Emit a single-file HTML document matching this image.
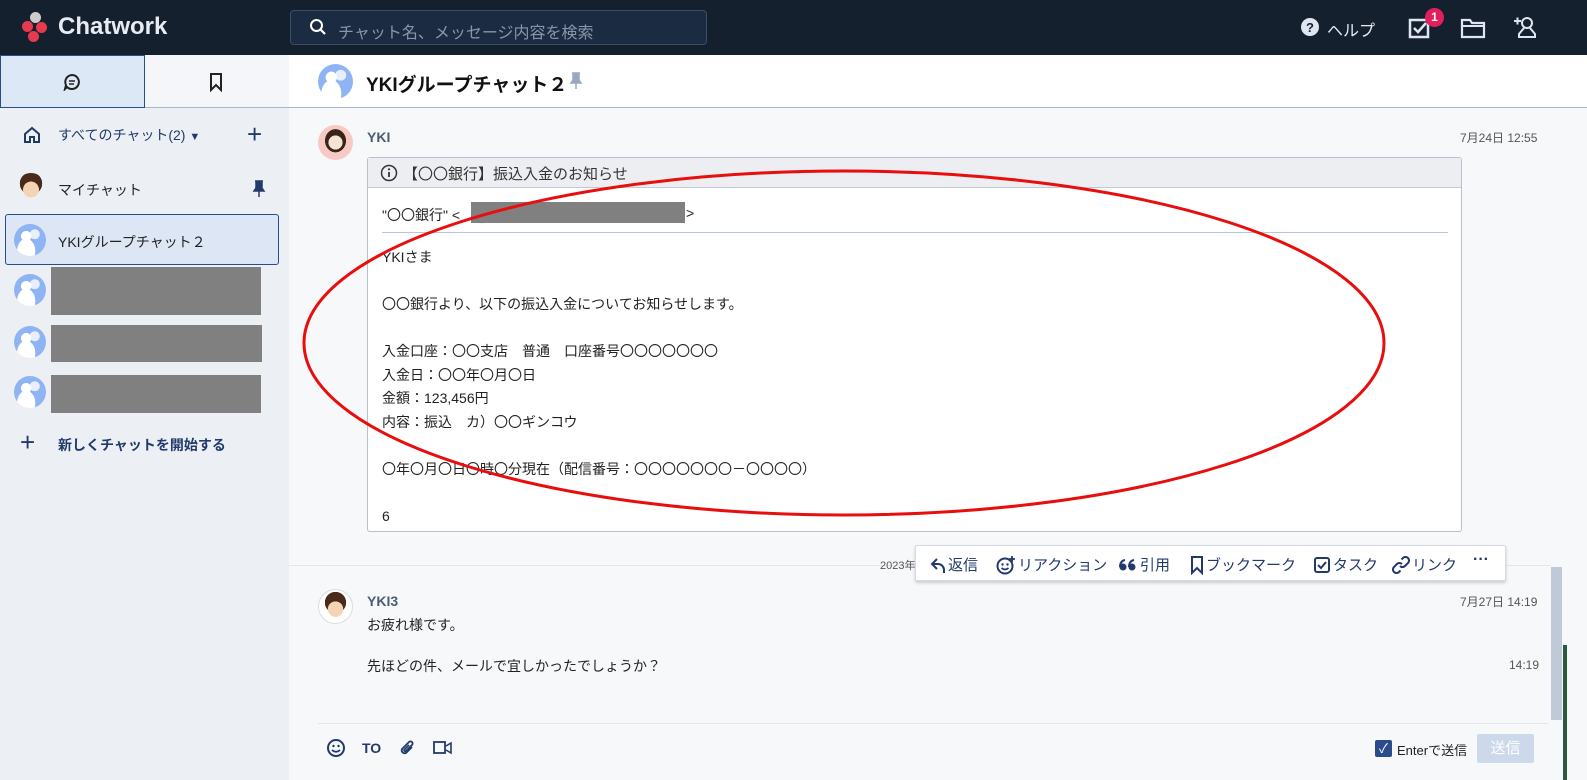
<!DOCTYPE html><html><head><meta charset="utf-8"><style>
*{box-sizing:border-box;margin:0;padding:0}
body{width:1587px;height:780px;overflow:hidden;font-family:"Liberation Sans","Noto Sans CJK JP",sans-serif;background:#f7f8fa;position:relative;color:#222;font-size:14px}
.a{position:absolute}
.hdr{left:0;top:0;width:1587px;height:55px;background:#15202f}
.av{border-radius:50%;background:#c9dcff;overflow:hidden}
.grp{background:radial-gradient(circle at 38% 38%,#fff 0 18%,transparent 19%),radial-gradient(ellipse at 38% 85%,#fff 0 32%,transparent 33%),radial-gradient(circle at 65% 32%,#e8f0ff 0 16%,transparent 17%),#8fb4f4}
.gray{background:#808080}
.tb{color:#223a6b;font-size:14px}
.act{position:absolute;top:8px;display:flex;align-items:center;gap:2px}
.act svg{flex:none}
</style></head><body>
<div class="a hdr"></div>
<div class="a" style="left:22px;top:12px;width:30px;height:30px">
<div class="a" style="left:8px;top:0;width:11px;height:11px;border-radius:50%;background:#ccc"></div>
<div class="a" style="left:0;top:9px;width:11px;height:11px;border-radius:50%;background:#e83a4f"></div>
<div class="a" style="left:14px;top:10px;width:11px;height:11px;border-radius:50%;background:#e83a4f"></div>
<div class="a" style="left:6px;top:19px;width:11px;height:11px;border-radius:50%;background:#e83a4f"></div>
</div>
<div class="a" style="left:58px;top:13px;color:#e8ecf2;font-size:24px;font-weight:bold">Chatwork</div>
<div class="a" style="left:290px;top:10px;width:417px;height:35px;border:1px solid #3a4d6a;border-radius:4px;background:#1b2b42"></div>
<svg class="a" style="left:309px;top:18px" width="18" height="18"><circle cx="7.5" cy="7.5" r="5.5" fill="none" stroke="#fff" stroke-width="2"/><path d="M11.5 11.5 16 16" stroke="#fff" stroke-width="2.2"/></svg>
<div class="a" style="left:338px;top:19px;color:#8a96a8;font-size:16px">チャット名、メッセージ内容を検索</div>
<svg class="a" style="left:1300px;top:17px" width="20" height="20"><circle cx="10" cy="10" r="9" fill="#dfe6f2"/><text x="10" y="15" text-anchor="middle" font-size="13" font-weight="bold" fill="#15202f" font-family="Liberation Sans">?</text></svg>
<div class="a" style="left:1327px;top:17px;color:#e8ecf2;font-size:16px">ヘルプ</div>
<svg class="a" style="left:1408px;top:17px" width="26" height="22"><path d="M2 3h18v17H2z" fill="none" stroke="#dfe6f2" stroke-width="2.5"/><path d="M6 11l4 4 8-9" fill="none" stroke="#dfe6f2" stroke-width="2.5"/></svg>
<div class="a" style="left:1425px;top:8px;width:19px;height:19px;border-radius:50%;background:#e21f5c;color:#fff;font-size:12px;font-weight:bold;text-align:center;line-height:19px">1</div>
<svg class="a" style="left:1460px;top:17px" width="26" height="22"><path d="M2 3h8l2 3h12v14H2z" fill="none" stroke="#dfe6f2" stroke-width="2.2"/><path d="M2 9h22" stroke="#dfe6f2" stroke-width="2"/></svg>
<svg class="a" style="left:1512px;top:15px" width="26" height="26"><path d="M2 6h7M5.5 2.5v7" stroke="#dfe6f2" stroke-width="2"/><circle cx="15" cy="8" r="5" fill="none" stroke="#dfe6f2" stroke-width="2"/><path d="M12 13l-5 6v3h16v-3l-5-6" fill="none" stroke="#dfe6f2" stroke-width="2"/></svg>

<div class="a" style="left:0;top:55px;width:289px;height:725px;background:#eceff4"></div>
<div class="a" style="left:0;top:55px;width:145px;height:53px;background:#dde8f7;border:1px solid #2b4c8a"></div>
<div class="a" style="left:145px;top:55px;width:145px;height:53px;background:#f4f6f9;border-bottom:1px solid #aab5c6;border-right:1px solid #aab5c6"></div>
<svg class="a" style="left:63px;top:73px" width="18" height="18"><path d="M9 2a7 7 0 1 1-5 12l-2 2 1-4A7 7 0 0 1 9 2z" fill="none" stroke="#222" stroke-width="2"/><path d="M6 8h6M6 11h5" stroke="#222" stroke-width="1.5"/></svg>
<svg class="a" style="left:209px;top:72px" width="14" height="20"><path d="M2 2h10v16l-5-5-5 5z" fill="none" stroke="#222" stroke-width="2"/></svg>
<div class="a" style="left:289px;top:55px;width:1298px;height:53px;background:#fff;border-bottom:1px solid #aab5c6"></div>
<div class="a av grp" style="left:318px;top:64px;width:35px;height:35px"></div>
<div class="a" style="left:366px;top:70px;font-size:19px;font-weight:bold;color:#111">YKIグループチャット２</div>
<svg class="a" style="left:569px;top:72px" width="14" height="18"><path d="M3 1h8M4 1v7l-2 3h10l-2-3V1M7 11v6" fill="#99a8bf" stroke="#99a8bf" stroke-width="1.5"/></svg>

<svg class="a" style="left:23px;top:126px" width="18" height="18"><path d="M2 8l7-6 7 6v8h-5v-5H7v5H2z" fill="none" stroke="#223a6b" stroke-width="2"/></svg>
<div class="a tb" style="left:58px;top:125px">すべてのチャット(2) <span style="font-size:11px">▼</span></div>
<div class="a" style="left:247px;top:119px;font-size:26px;color:#223a6b">+</div>
<div class="a av" style="left:16px;top:173px;width:30px;height:30px;background:radial-gradient(circle at 50% 55%,#f5d4b4 0 35%,transparent 36%),radial-gradient(circle at 50% 35%,#4a2a1a 0 45%,transparent 46%),#eceff4"></div>
<div class="a tb" style="left:58px;top:180px;color:#222">マイチャット</div>
<svg class="a" style="left:252px;top:180px" width="14" height="18"><path d="M3 1h8M4 1v7l-2 3h10l-2-3V1M7 11v6" fill="#223a6b" stroke="#223a6b" stroke-width="1.5"/></svg>
<div class="a" style="left:5px;top:214px;width:274px;height:51px;background:#dce6f5;border:1px solid #2b4c8a;border-radius:3px"></div>
<div class="a av grp" style="left:14px;top:224px;width:32px;height:32px"></div>
<div class="a" style="left:58px;top:232px;font-size:14px">YKIグループチャット２</div>
<div class="a av grp" style="left:14px;top:274px;width:32px;height:32px"></div>
<div class="a gray" style="left:51px;top:267px;width:210px;height:48px"></div>
<div class="a av grp" style="left:14px;top:326px;width:32px;height:32px"></div>
<div class="a gray" style="left:51px;top:325px;width:211px;height:37px"></div>
<div class="a av grp" style="left:14px;top:376px;width:32px;height:32px"></div>
<div class="a gray" style="left:51px;top:375px;width:210px;height:38px"></div>
<div class="a" style="left:20px;top:427px;font-size:26px;color:#223a6b">+</div>
<div class="a tb" style="left:58px;top:435px;font-weight:bold">新しくチャットを開始する</div>

<div class="a av" style="left:318px;top:125px;width:35px;height:35px;background:radial-gradient(ellipse at 50% 50%,#f6e3d8 0 28%,transparent 29%),radial-gradient(ellipse at 50% 45%,#3a2418 0 42%,transparent 43%),#f7c9c4"></div>
<div class="a" style="left:367px;top:129px;font-weight:bold;color:#4b5d70;font-size:14px">YKI</div>
<div class="a" style="left:1460px;top:129px;font-size:12px;color:#555">7月24日 12:55</div>
<div class="a" style="left:367px;top:157px;width:1095px;height:375px;background:#fff;border:1px solid #b8c0cc;border-radius:3px"></div>
<div class="a" style="left:368px;top:158px;width:1093px;height:30px;background:#eceef1;border-bottom:1px solid #c3c9d2"></div>
<svg class="a" style="left:380px;top:164px" width="18" height="18"><circle cx="9" cy="9" r="7.5" fill="none" stroke="#333" stroke-width="1.5"/><path d="M9 8v5" stroke="#333" stroke-width="1.8"/><circle cx="9" cy="5.3" r="1.1" fill="#333"/></svg>
<div class="a" style="left:403px;top:163px;font-size:15px;color:#333">【〇〇銀行】振込入金のお知らせ</div>
<div class="a" style="left:382px;top:205px;font-size:14px">"〇〇銀行" &lt;</div>
<div class="a gray" style="left:471px;top:202px;width:214px;height:21px"></div>
<div class="a" style="left:686px;top:205px;font-size:14px">&gt;</div>
<div class="a" style="left:382px;top:232px;width:1066px;height:1px;background:#b8c5d6"></div>
<div class="a" style="left:382px;top:246px;font-size:14px;line-height:23.5px;white-space:pre">YKIさま

〇〇銀行より、以下の振込入金についてお知らせします。

入金口座：〇〇支店　普通　口座番号〇〇〇〇〇〇〇
入金日：〇〇年〇月〇日
金額：123,456円
内容：振込　カ）〇〇ギンコウ

〇年〇月〇日〇時〇分現在（配信番号：〇〇〇〇〇〇〇－〇〇〇〇）

6</div>
<svg class="a" style="left:0;top:0" width="1587" height="780"><ellipse cx="844" cy="343" rx="540" ry="172" fill="none" stroke="#e80e0e" stroke-width="3"/></svg>

<div class="a" style="left:289px;top:565px;width:1262px;height:1px;background:#e3e7ec"></div>
<div class="a" style="left:880px;top:557px;font-size:11px;color:#555">2023年</div>
<div class="a" style="left:915px;top:545px;width:591px;height:36px;background:#fff;border:1px solid #d5dbe4;box-shadow:0 2px 3px rgba(0,0,0,.18);border-radius:2px;color:#223a6b;font-size:15px;white-space:nowrap">
<span class="act" style="left:14px"><svg width="16" height="18"><path d="M7 3 2 8l5 5M2 8h6a6 6 0 0 1 6 6v3" fill="none" stroke="#223a6b" stroke-width="2"/></svg>返信</span>
<span class="act" style="left:80px"><svg width="20" height="20"><circle cx="9" cy="11" r="7.5" fill="none" stroke="#223a6b" stroke-width="2"/><circle cx="6.5" cy="9.5" r="1.2" fill="#223a6b"/><circle cx="11.5" cy="9.5" r="1.2" fill="#223a6b"/><path d="M5.5 13q3.5 3 7 0M16 1v6M13 4h6" fill="none" stroke="#223a6b" stroke-width="1.8"/></svg>リアクション</span>
<span class="act" style="left:202px"><svg width="20" height="14"><circle cx="5" cy="9" r="3.5" fill="#223a6b"/><circle cx="14" cy="9" r="3.5" fill="#223a6b"/><path d="M2 9q0-6 5-7M11 9q0-6 5-7" stroke="#223a6b" stroke-width="2" fill="none"/></svg>引用</span>
<span class="act" style="left:274px"><svg width="14" height="20"><path d="M2 2h10v16l-5-5-5 5z" fill="none" stroke="#223a6b" stroke-width="2"/></svg>ブックマーク</span>
<span class="act" style="left:397px"><svg width="18" height="18"><rect x="2" y="2" width="14" height="14" rx="2" fill="none" stroke="#223a6b" stroke-width="2"/><path d="M5 9l3 3 5-6" fill="none" stroke="#223a6b" stroke-width="2"/></svg>タスク</span>
<span class="act" style="left:476px"><svg width="18" height="18"><path d="M8 10a3.5 3.5 0 0 0 5 0l3-3a3.5 3.5 0 0 0-5-5l-1.5 1.5M10 8a3.5 3.5 0 0 0-5 0l-3 3a3.5 3.5 0 0 0 5 5l1.5-1.5" fill="none" stroke="#223a6b" stroke-width="2"/></svg>リンク</span>
<span class="a" style="left:557px;top:5px;font-weight:bold;font-size:16px">···</span>
</div>

<div class="a av" style="left:318px;top:589px;width:35px;height:35px;background:radial-gradient(circle at 50% 58%,#f5d4b4 0 30%,transparent 31%),radial-gradient(circle at 50% 38%,#4a2a1a 0 40%,transparent 41%),#fff;border:1px solid #ddd"></div>
<div class="a" style="left:367px;top:593px;font-weight:bold;color:#4b5d70">YKI3</div>
<div class="a" style="left:1460px;top:593px;font-size:12px;color:#555">7月27日 14:19</div>
<div class="a" style="left:367px;top:615px;font-size:14px">お疲れ様です。</div>
<div class="a" style="left:367px;top:656px;font-size:14px">先ほどの件、メールで宜しかったでしょうか？</div>
<div class="a" style="left:1509px;top:658px;font-size:12px;color:#555">14:19</div>
<div class="a" style="left:318px;top:723px;width:1230px;height:1px;background:#e3e7ec"></div>
<div class="a" style="left:1551px;top:567px;width:11px;height:153px;background:#c0c9d8"></div>
<div class="a" style="left:1563px;top:645px;width:4px;height:135px;background:#2a5a3a"></div>
<svg class="a" style="left:326px;top:738px" width="20" height="20"><circle cx="10" cy="10" r="8" fill="none" stroke="#223a6b" stroke-width="2"/><circle cx="7.5" cy="8" r="1.2" fill="#223a6b"/><circle cx="12.5" cy="8" r="1.2" fill="#223a6b"/><path d="M6 12q4 3.5 8 0" fill="none" stroke="#223a6b" stroke-width="1.8"/></svg>
<div class="a" style="left:362px;top:740px;font-size:14px;font-weight:bold;color:#223a6b">TO</div>
<svg class="a" style="left:398px;top:738px" width="18" height="20"><path d="M14 9l-6 6a3 3 0 0 1-4-4l7-7a2 2 0 0 1 3 3l-6 6a1 1 0 0 1-1.5-1.5L11 7" fill="none" stroke="#223a6b" stroke-width="1.8"/></svg>
<svg class="a" style="left:433px;top:741px" width="20" height="14"><rect x="1" y="1" width="11" height="11" fill="none" stroke="#223a6b" stroke-width="1.8"/><path d="M13 5l5-3v10l-5-3" fill="none" stroke="#223a6b" stroke-width="1.6"/></svg>
<div class="a" style="left:1375px;top:740px;width:17px;height:17px;background:#2b4c8a;border-radius:2px;color:#fff;font-size:13px;text-align:center;line-height:17px">✓</div>
<div class="a" style="left:1397px;top:740px;font-size:13px">Enterで送信</div>
<div class="a" style="left:1477px;top:734px;width:57px;height:29px;background:#cdd8ea;border-radius:2px;color:#fff;font-size:15px;text-align:center;line-height:29px">送信</div>
</body></html>
